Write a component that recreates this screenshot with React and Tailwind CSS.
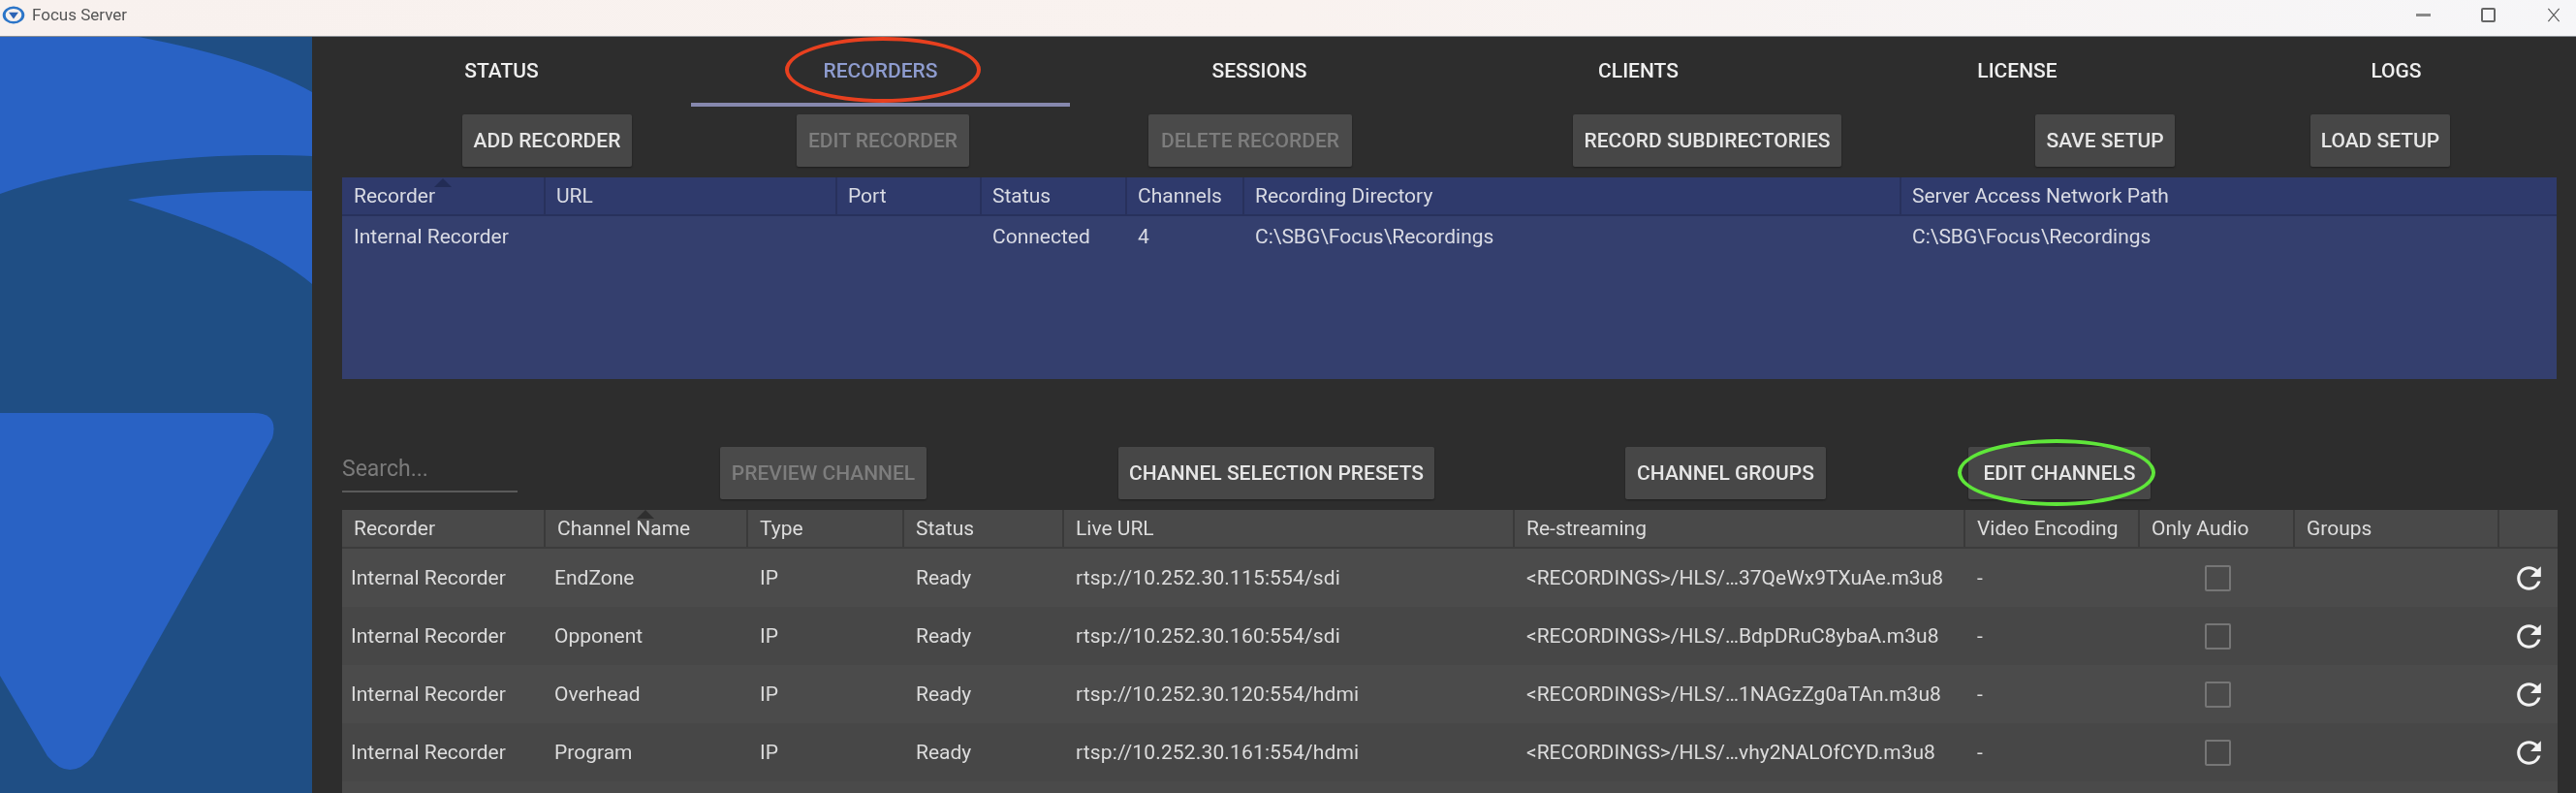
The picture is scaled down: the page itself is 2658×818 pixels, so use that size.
const tabs = ["STATUS", "RECORDERS", "SESSIONS", "CLIENTS", "LICENSE", "LOGS"];

function Btn({ label, className = "", off = false }) {
  return (
    <div
      className={`h-[54px] pt-[1px] flex items-center justify-center text-[21px] font-medium whitespace-nowrap rounded-[2px] shadow-[0_1px_2px_rgba(0,0,0,0.35)] ${
        off ? "bg-[#4a4a4a] text-[#7d7d7d]" : "bg-[#474747] text-[#e6e6e6]"
      } ${className}`}
    >
      {label}
    </div>
  );
}

const recHead = ["Recorder", "URL", "Port", "Status", "Channels", "Recording Directory", "Server Access Network Path"];
const recRow = ["Internal Recorder", "", "", "Connected", "4", "C:\\SBG\\Focus\\Recordings", "C:\\SBG\\Focus\\Recordings"];
const chanHead = ["Recorder", "Channel Name", "Type", "Status", "Live URL", "Re-streaming", "Video Encoding", "Only Audio", "Groups", ""];
const chanRows = [
  ["Internal Recorder", "EndZone", "IP", "Ready", "rtsp://10.252.30.115:554/sdi", "<RECORDINGS>/HLS/…37QeWx9TXuAe.m3u8", "-"],
  ["Internal Recorder", "Opponent", "IP", "Ready", "rtsp://10.252.30.160:554/sdi", "<RECORDINGS>/HLS/…BdpDRuC8ybaA.m3u8", "-"],
  ["Internal Recorder", "Overhead", "IP", "Ready", "rtsp://10.252.30.120:554/hdmi", "<RECORDINGS>/HLS/…1NAGzZg0aTAn.m3u8", "-"],
  ["Internal Recorder", "Program", "IP", "Ready", "rtsp://10.252.30.161:554/hdmi", "<RECORDINGS>/HLS/…vhy2NALOfCYD.m3u8", "-"],
];
const recCols = "grid-cols-[210px_301px_149px_150px_121px_678px_676px]";
const chanCols = "grid-cols-[210px_209px_161px_165px_465px_465px_180px_160px_211px_60px]";

function Refresh() {
  return (
    <svg viewBox="0 0 24 24" className="w-[37px] h-[37px]" fill="#f2f2f2">
      <path d="M17.65 6.35A7.958 7.958 0 0 0 12 4c-4.42 0-7.99 3.58-7.99 8s3.57 8 7.99 8c3.73 0 6.84-2.55 7.73-6h-2.08A5.99 5.99 0 0 1 12 18c-3.31 0-6-2.69-6-6s2.69-6 6-6c1.66 0 3.14.69 4.22 1.78L13 11h7V4l-2.35 2.35z" />
    </svg>
  );
}

function Sidebar() {
  return (
    <div className="w-[322px] shrink-0 bg-[#1f4e84]">
      <svg viewBox="0 0 322 780" className="w-[322px] h-[780px] block">
        <path fill="#2962c4" d="M0 0 L143 0 C205 12 270 28 322 57 L322 123 C220 118 90 130 0 162 Z" />
        <path fill="#2962c4" d="M132 168 C190 160 260 158 322 159 L322 255 C270 212 200 190 132 168 Z" />
        <path fill="#2962c4" d="M0 388 L262 388 Q288 388 281 414 L96 742 Q72 770 49 742 L0 659 Z" />
      </svg>
    </div>
  );
}

export default function App() {
  return (
    <div className="relative w-[2658px] h-[818px] overflow-hidden flex flex-col bg-[#2d2d2d] font-['Roboto',sans-serif] blur-[0.7px]">
      <div className="h-[38px] shrink-0 flex items-center bg-gradient-to-r from-[#f8f1ee] via-[#f9f2ef] to-[#f6f6f8] border-b border-[#8a8f94] pl-[2px] pb-[6px]">
        <svg viewBox="0 0 24 24" preserveAspectRatio="none" className="w-[24px] h-[19px]">
          <circle cx="12" cy="12" r="9.8" fill="none" stroke="#2c75c8" strokeWidth="3" />
          <path d="M7 8.5 H17 L12 17 Z" fill="#2c63b5" />
        </svg>
        <span className="ml-[7px] text-[17px] text-[#555]">Focus Server</span>
        <div className="ml-auto flex items-center text-[#555]">
          <div className="w-[15px] h-[3px] bg-[#8a8a8a] mr-[52px]" />
          <div className="w-[15px] h-[15px] border-2 border-[#666] rounded-[2px] mr-[52px]" />
          <svg viewBox="0 0 16 16" className="w-[16px] h-[15px] mr-[15px]" stroke="#555" strokeWidth="1.2">
            <path d="M2 1 L14 15 M14 1 L2 15" />
          </svg>
        </div>
      </div>

      <div className="flex flex-1 min-h-0">
        <Sidebar />
        <div className="flex-1 min-w-0 flex flex-col">
          <div className="grid grid-cols-[repeat(6,391px)] h-[72px] shrink-0">
            {tabs.map((t, i) => (
              <div
                key={t}
                className={`flex items-center justify-center text-[21px] font-medium ${
                  i === 1 ? "text-[#8e9ccf] border-b-[4px] border-[#8688ae] pt-[3px]" : "pb-[1px] text-[#efefef]"
                }`}
              >
                {t}
              </div>
            ))}
          </div>

          <div className="flex mt-[8px] shrink-0">
            <Btn label="ADD RECORDER" className="w-[175px] ml-[155px]" />
            <Btn label="EDIT RECORDER" off className="w-[178px] ml-[170px]" />
            <Btn label="DELETE RECORDER" off className="w-[210px] ml-[185px]" />
            <Btn label="RECORD SUBDIRECTORIES" className="w-[277px] ml-[228px]" />
            <Btn label="SAVE SETUP" className="w-[144px] ml-[200px]" />
            <Btn label="LOAD SETUP" className="w-[144px] ml-[140px]" />
          </div>

          <div className="relative ml-[31px] mt-[11px] w-[2285px] h-[208px] shrink-0 bg-[#343f6e] text-[#d9dbe4] text-[21px]">
            <div className="absolute left-[95px] top-[1px] w-0 h-0 border-x-[9px] border-x-transparent border-b-[9px] border-b-[#222c55]" />
            <div className={`grid ${recCols} h-[40px] bg-[#2f3a6c] border-b-2 border-[#28315c]`}>
              {recHead.map((h, i) => (
                <div key={h} className={`flex items-center pt-[2px] ${i === 0 ? "pl-[12px]" : "pl-[11px]"} ${i < 6 ? "border-r-2 border-[#28315c]" : ""}`}>{h}</div>
              ))}
            </div>
            <div className={`grid ${recCols} h-[42px]`}>
              {recRow.map((c, i) => (
                <div key={i} className={`flex items-center pt-[2px] whitespace-nowrap ${i === 0 ? "pl-[12px]" : "pl-[11px]"}`}>{c}</div>
              ))}
            </div>
          </div>

          <div className="flex items-stretch mt-[70px] shrink-0">
            <div className="ml-[31px] w-[181px] h-[47px] flex items-start border-b-2 border-[#5a5a5a] text-[#7a7a7a] text-[23px] leading-[46px]">Search...</div>
            <Btn label="PREVIEW CHANNEL" off className="w-[213px] ml-[209px]" />
            <Btn label="CHANNEL SELECTION PRESETS" className="w-[326px] ml-[198px]" />
            <Btn label="CHANNEL GROUPS" className="w-[207px] ml-[197px]" />
            <Btn label="EDIT CHANNELS" className="w-[188px] ml-[147px]" />
          </div>

          <div className="relative ml-[31px] mt-[11px] w-[2286px] flex-1 min-h-0 bg-[#4a4a4a] text-[#dcdcdc] text-[21px]">
            <div className="absolute left-[304px] top-[0px] w-0 h-0 border-x-[9px] border-x-transparent border-b-[9px] border-b-[#2f2f2f]" />
            <div className={`grid ${chanCols} h-[40px] border-b-2 border-[#3c3c3c] bg-[#494949]`}>
              {chanHead.map((h, i) => (
                <div key={i} className={`flex items-center pt-[2px] pl-[12px] ${i < 9 ? "border-r-2 border-[#3a3a3a]" : ""}`}>{h}</div>
              ))}
            </div>
            {chanRows.map((r, ri) => (
              <div key={ri} className={`grid ${chanCols} h-[60px] ${ri % 2 ? "bg-[#474747]" : "bg-[#4b4b4b]"}`}>
                {r.map((c, i) => (
                  <div key={i} className={`flex items-center pt-[2px] whitespace-nowrap ${i < 2 ? "pl-[9px]" : "pl-[12px]"} ${i === 4 ? "tracking-[0.15px]" : ""}`}>{c}</div>
                ))}
                <div className="flex items-center justify-center">
                  <div className="w-[27px] h-[27px] border-2 border-[#767676] rounded-[2px]" />
                </div>
                <div />
                <div className="flex items-center justify-center"><Refresh /></div>
              </div>
            ))}
          </div>
        </div>
      </div>

      <div className="absolute left-[810px] top-[38px] w-[202px] h-[68px] rounded-[50%] border-[4px] border-[#e8401f]" />
      <div className="absolute left-[2020px] top-[453px] w-[204px] h-[69px] rounded-[50%] border-[4px] border-[#5fe63a]" />
    </div>
  );
}
